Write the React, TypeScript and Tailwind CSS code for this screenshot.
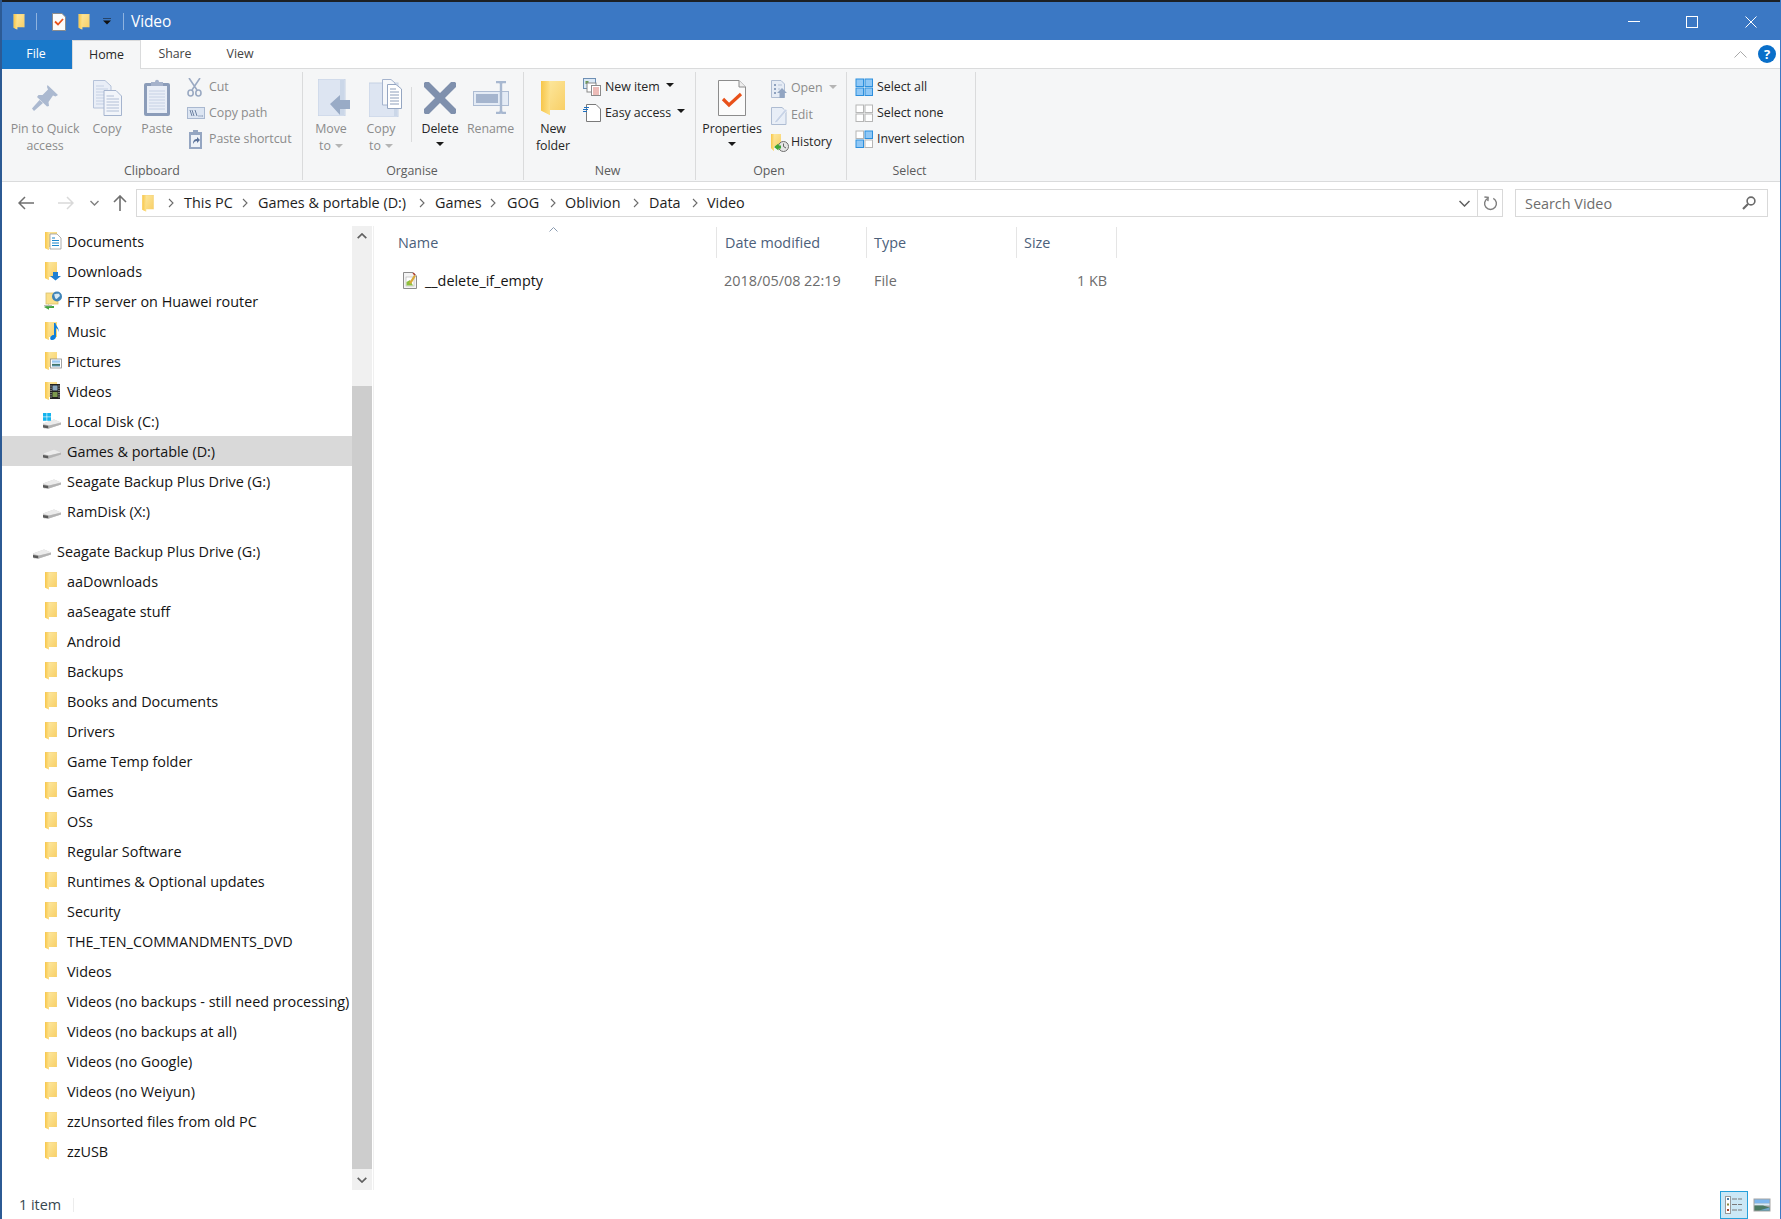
import React from "react";

const FONT = "font-['Open_Sans','Noto_Sans',sans-serif]";

function Grad() {
  return (
    <svg width="0" height="0" className="absolute">
      <defs>
        <linearGradient id="fold" x1="0" y1="0" x2="1" y2="1">
          <stop offset="0" stopColor="#fdeba6" />
          <stop offset="1" stopColor="#f8cd62" />
        </linearGradient>
        <linearGradient id="flap" x1="0" y1="0" x2="1" y2="0">
          <stop offset="0" stopColor="#f7c64a" />
          <stop offset="1" stopColor="#fde18a" />
        </linearGradient>
        <linearGradient id="sky" x1="0" y1="0" x2="0" y2="1">
          <stop offset="0" stopColor="#7db7ee" />
          <stop offset="0.5" stopColor="#cfe6f7" />
          <stop offset="0.6" stopColor="#3f6f55" />
          <stop offset="1" stopColor="#5f9fc8" />
        </linearGradient>
      </defs>
    </svg>
  );
}

function Folder({ className = "w-[12px] h-[18px]" }: { className?: string }) {
  return (
    <svg viewBox="0 0 12 18" className={className}>
      <path d="M0 0H12V15H4V17.5L0 15.5Z" fill="url(#fold)" />
      <path d="M0 0H3.5L4 2V17.5L0 15.5Z" fill="url(#flap)" />
      <path d="M0 0H12" stroke="#f3cf73" strokeWidth="0.6" />
      <path d="M11.7 0V15" stroke="#f5d684" strokeWidth="0.6" />
    </svg>
  );
}

function Drive({ win }: { win?: boolean }) {
  return (
    <svg viewBox="0 0 18 16" className="w-[18px] h-[16px]">
      <path d="M0 10.5L11 6.5L18 9.5V11.5L6 15.5H1L0 14Z" fill="#c9c9c9" />
      <path d="M0 10.5L11 6.5L18 9.5L5.5 12.5Z" fill="#ececec" />
      <path d="M0 12L5.5 12.8V15.5L0 14.5Z" fill="#5a5a5a" />
      <path d="M5.5 12.8L18 9.8V11.5L5.5 15.5Z" fill="#b3b3b3" />
      {win && (
        <g fill="#14b4ee">
          <rect x="0" y="0" width="3.6" height="3.6" />
          <rect x="4.2" y="0" width="3.8" height="3.6" />
          <rect x="0" y="4.2" width="3.6" height="3.6" />
          <rect x="4.2" y="4.2" width="3.8" height="3.6" />
        </g>
      )}
    </svg>
  );
}

function NavIcon({ kind }: { kind: string }) {
  if (kind === "drive") return <Drive />;
  if (kind === "win") return <Drive win />;
  if (kind === "folder") return <span className="ml-[2px] flex"><Folder /></span>;
  return (
    <svg viewBox="0 0 20 20" className="w-[20px] h-[20px]">
      {kind !== "ftp" && (
        <>
          <path d="M2 1H14V16H6V19L2 17Z" fill="url(#fold)" />
          <path d="M2 1H5.5L6 3V19L2 17Z" fill="url(#flap)" />
        </>
      )}
      {kind === "docs" && (
        <>
          <path d="M7 3H14L18 7V18H7Z" fill="#fff" stroke="#9b9b9b" strokeWidth="0.8" />
          <path d="M9 7H12M9 9.5H16M9 12H16M9 14.5H16" stroke="#1b86cc" strokeWidth="1.1" />
        </>
      )}
      {kind === "down" && <path d="M10 11H15V15H18L12.5 19.5L7 15H10Z" fill="#1e7fd3" />}
      {kind === "music" && <path d="M11 2H12.5C13 6 17 7 15 11C15.5 8 14 7.5 13 7V15.5C13 18 10.5 19.5 8.5 19C6.5 18.3 7 15.5 9 14.5C9.8 14.1 10.5 14 11 14.2Z" fill="#0f7fdc" />}
      {kind === "pics" && (
        <>
          <rect x="7.5" y="8" width="11" height="9" fill="#fff" stroke="#8d8d8d" strokeWidth="0.8" />
          <rect x="9" y="9.5" width="8" height="6" fill="url(#sky)" />
        </>
      )}
      {kind === "vids" && (
        <>
          <rect x="7" y="3" width="10" height="15" fill="#222" />
          <rect x="9.5" y="4.5" width="5" height="5" fill="#8aa8c0" />
          <rect x="9.5" y="11" width="5" height="5" fill="#7d9a4f" />
          <path d="M8 4.5V17M16 4.5V17" stroke="#ddd" strokeWidth="1" strokeDasharray="1 1.2" />
        </>
      )}
      {kind === "ftp" && (
        <>
          <rect x="3" y="2" width="12" height="11" fill="#fbe08a" stroke="#d9c06a" strokeWidth="0.8" />
          <circle cx="14" cy="5.5" r="5" fill="#3f84b8" />
          <path d="M11 3.5C13 2 15 3 16 2.5L17 5C15 6 14.5 8 13 8C11.5 7 12 5 11 3.5Z" fill="#d6e8f2" />
          <path d="M1 16L6 13.5V15H11V17H6V18.7Z" fill="#43a53e" />
          <rect x="1" y="14" width="8" height="1.2" fill="#bbb" />
        </>
      )}
    </svg>
  );
}

const quick: [string, string][] = [
  ["docs", "Documents"],
  ["down", "Downloads"],
  ["ftp", "FTP server on Huawei router"],
  ["music", "Music"],
  ["pics", "Pictures"],
  ["vids", "Videos"],
  ["win", "Local Disk (C:)"],
  ["drive", "Games & portable (D:)"],
  ["drive", "Seagate Backup Plus Drive (G:)"],
  ["drive", "RamDisk (X:)"],
];

const folders = [
  "aaDownloads",
  "aaSeagate stuff",
  "Android",
  "Backups",
  "Books and Documents",
  "Drivers",
  "Game Temp folder",
  "Games",
  "OSs",
  "Regular Software",
  "Runtimes & Optional updates",
  "Security",
  "THE_TEN_COMMANDMENTS_DVD",
  "Videos",
  "Videos (no backups - still need processing)",
  "Videos (no backups at all)",
  "Videos (no Google)",
  "Videos (no Weiyun)",
  "zzUnsorted files from old PC",
  "zzUSB",
];

function NavRow({ kind, label, selected }: { kind: string; label: string; selected?: boolean }) {
  return (
    <div className={`flex items-center h-[30px] ${selected ? "bg-[#d9d9d9]" : ""}`}>
      <span className="w-[65px] pl-[41px] shrink-0 flex items-center justify-start">
        <NavIcon kind={kind} />
      </span>
      <span className="pt-[1px] text-[#141414] whitespace-nowrap text-[14.4px]">{label}</span>
    </div>
  );
}

function Caret({ dim }: { dim?: boolean }) {
  return (
    <svg viewBox="0 0 8 4" className="w-[8px] h-[4px]">
      <path d="M0 0H8L4 4Z" fill={dim ? "#b5b5b5" : "#1a1a1a"} />
    </svg>
  );
}

function Big({
  className,
  icon,
  lines,
  dim,
  caret,
}: {
  className: string;
  icon: React.ReactNode;
  lines: React.ReactNode[];
  dim?: boolean;
  caret?: boolean;
}) {
  return (
    <div className={`flex flex-col items-center shrink-0 ${className}`}>
      <div className="h-[45px] flex items-center justify-center">{icon}</div>
      <div className={`leading-[17px] text-center whitespace-nowrap text-[12.4px] tracking-[-0.05px] ${dim ? "text-[#8c8c8c]" : "text-[#262626]"}`}>
        {lines.map((l, i) => (
          <div key={i} className="flex items-center justify-center gap-[4px]">{l}</div>
        ))}
      </div>
      {caret && (
        <div className="h-[14px] flex items-center">
          <Caret />
        </div>
      )}
    </div>
  );
}

function Small({
  icon,
  label,
  dim,
  caret,
  dimCaret,
  className = "h-[26px]",
  iconClass = "w-[22px]",
}: {
  icon: React.ReactNode;
  label: string;
  dim?: boolean;
  caret?: boolean;
  dimCaret?: boolean;
  className?: string;
  iconClass?: string;
}) {
  return (
    <div className={`flex items-center ${className}`}>
      <span className={`flex items-center shrink-0 ${iconClass}`}>{icon}</span>
      <span className={`whitespace-nowrap text-[12.4px] tracking-[-0.05px] ${dim ? "text-[#8c8c8c]" : "text-[#262626]"}`}>{label}</span>
      {caret && (
        <span className="ml-[6px] flex pb-[4px]">
          <Caret dim={dimCaret} />
        </span>
      )}
    </div>
  );
}

function Group({
  className,
  label,
  labelClass = "",
  children,
}: {
  className: string;
  label: string;
  labelClass?: string;
  children: React.ReactNode;
}) {
  return (
    <div className={`relative shrink-0 h-full flex flex-col border-r border-[#dadbdc] ${className}`}>
      <div className="flex-1 flex pt-[3px]">{children}</div>
      <div className={`h-[17px] mb-[1px] leading-[17px] text-center text-[12.4px] text-[#5c5c5c] tracking-[-0.05px] ${labelClass}`}>{label}</div>
    </div>
  );
}

const PinIcon = (
  <svg viewBox="0 0 26 26" className="w-[26px] h-[26px]">
    <path d="M15.5 0L26 10L23.5 11.5L21 10.5L16.5 17L17 21L15 21.5L5 12L6.5 10L10.5 10L16 4.5L15 2Z" fill="#abb9d0" />
    <path d="M7.5 15L0 23.5L2 26L11 18Z" fill="#abb9d0" />
  </svg>
);
const CopyIcon = (
  <svg viewBox="0 0 29 36" className="w-[29px] h-[36px]">
    <path d="M.5.5H12L18 6V28H.5Z" fill="#e9eef7" stroke="#b5c2d9" />
    <path d="M3 6H11M3 9H15M3 12H15M3 15H15M3 18H15M3 21H15M3 24H15" stroke="#c6d1e4" />
    <path d="M11 10.5H23L28.5 16V35.5H11Z" fill="#f2f5fa" stroke="#a5b4ce" />
    <path d="M13.5 16H21M13.5 19H26M13.5 22H26M13.5 25H26M13.5 28H26M13.5 31H26" stroke="#b2bfd6" />
  </svg>
);
const PasteIcon = (
  <svg viewBox="0 0 26 37" className="w-[26px] h-[37px]">
    <rect x="0" y="4" width="26" height="33" rx="2" fill="#8b9cb9" />
    <rect x="3" y="7" width="20" height="27" fill="#e9eef7" />
    <path d="M5 12H21M5 15H21M5 18H21M5 21H21M5 24H21M5 27H21M5 30H21" stroke="#c6d1e4" />
    <path d="M7 3H11C11 0 15 0 15 3H19V7H7Z" fill="#a5b2cb" />
  </svg>
);
const CutIcon = (
  <svg viewBox="0 0 15 19" className="w-[15px] h-[19px]" fill="none" stroke="#9aa9c2" strokeWidth="1.6">
    <path d="M2 0L10 12M13 0L5 12" />
    <ellipse cx="3.6" cy="15" rx="2.6" ry="3" />
    <ellipse cx="11.4" cy="15" rx="2.6" ry="3" />
  </svg>
);
const PathIcon = (
  <svg viewBox="0 0 18 12" className="w-[18px] h-[12px]">
    <rect x="0.5" y="0.5" width="17" height="11" fill="#dce5f2" stroke="#a9b8d0" />
    <path d="M3 3L5 9M5 3L7 9M8 3L10 9" stroke="#5f7598" strokeWidth="0.9" fill="none" />
    <path d="M11.5 9H12.5M13.5 9H14.5M15 9H15.8" stroke="#5f7598" />
  </svg>
);
const ShortcutIcon = (
  <svg viewBox="0 0 13 19" className="ml-[2px] w-[13px] h-[19px]">
    <rect x="0" y="2" width="13" height="17" fill="#95a6c2" />
    <rect x="2" y="5" width="9" height="12" fill="#eef2f8" />
    <rect x="4" y="0" width="5" height="4" fill="#95a6c2" />
    <path d="M4 14C4 10 6 9 8 9V7L11 10L8 13V11C6 11 5 12 4 14Z" fill="#5a7199" />
  </svg>
);
const MoveIcon = (
  <svg viewBox="0 0 32 37" className="ml-[6px] w-[32px] h-[37px]">
    <rect x="0" y="0" width="27" height="37" fill="#dde5f2" stroke="#c5d1e4" />
    <rect x="22" y="1" width="4" height="35" fill="#cbd7e8" />
    <path d="M12 25L22 16V21H32V30H22V36Z" fill="#99abc6" />
  </svg>
);
const CopyToIcon = (
  <svg viewBox="0 0 33 38" className="ml-[8px] w-[33px] h-[38px]">
    <rect x="0" y="4" width="29" height="34" fill="#dde5f2" stroke="#c5d1e4" />
    <rect x="25" y="18" width="3" height="19" fill="#cbd7e8" />
    <path d="M13.5.5H22L26 4V26H13.5Z" fill="#f6f8fb" stroke="#a5b4ce" />
    <path d="M18.5 5.5H27L32.5 10V29.5H18.5Z" fill="#fff" stroke="#95a6c2" />
    <path d="M21 10H27M21 13H30M21 16H30M21 19H30M21 22H30M21 25H30" stroke="#8d9eba" />
  </svg>
);
const DelIcon = (
  <svg viewBox="0 0 32 32" className="w-[32px] h-[32px]">
    <path d="M3 3L29 29M29 3L3 29" stroke="#7f90ad" strokeWidth="7" strokeLinecap="square" />
  </svg>
);
const RenameIcon = (
  <svg viewBox="0 0 36 33" className="w-[36px] h-[33px]">
    <rect x="0.5" y="10.5" width="35" height="14" fill="#e4ebf5" stroke="#adbcd3" />
    <rect x="3" y="13" width="22" height="9" fill="#a5b5ce" />
    <path d="M23 1H26C27.5 1 28 2 28 3V29C28 31 27.5 32 26 32H23M33 1H30C28.5 1 28 2 28 3M28 29C28 31 28.5 32 30 32H33" stroke="#a8b8d0" strokeWidth="2.4" fill="none" />
  </svg>
);
const BigFolder = (
  <svg viewBox="0 0 24 34" className="w-[24px] h-[34px]">
    <path d="M0 0H24V29H9V34L0 29.5Z" fill="url(#fold)" />
    <path d="M0 0H8L9 4V34L0 29.5Z" fill="url(#flap)" />
  </svg>
);
const NewItemIcon = (
  <svg viewBox="0 0 18 18" className="w-[18px] h-[18px]">
    <rect x="0.5" y="0.5" width="12" height="10" fill="#dbe9f6" stroke="#6e8fb4" />
    <rect x="2.5" y="3" width="3" height="3" fill="#6d9a54" />
    <rect x="4" y="5" width="9" height="9" fill="#fff" stroke="#8a8a8a" />
    <rect x="8.5" y="7.5" width="9" height="10" fill="#fff" stroke="#8a8a8a" />
    <path d="M10 10H16M10 12H16M10 14H16M10 16H16" stroke="#d0574b" strokeWidth="0.8" />
  </svg>
);
const EasyIcon = (
  <svg viewBox="0 0 18 18" className="w-[18px] h-[18px]">
    <path d="M3.5.5H13L17.5 5V17.5H3.5Z" fill="#fff" stroke="#7a7a7a" />
    <path d="M1 3.5H6M0 5.5H5M0 7.5H4" stroke="#1d6fc0" strokeWidth="1" />
  </svg>
);
const PropsIcon = (
  <svg viewBox="0 0 28 36" className="w-[28px] h-[36px]">
    <path d="M.5.5H21L27.5 7V35.5H.5Z" fill="#fbfbfb" stroke="#8c8c8c" />
    <path d="M21 .5V7H27.5" fill="#eee" stroke="#8c8c8c" />
    <path d="M5 19L11 25L23 14" stroke="#e8511a" strokeWidth="3.2" fill="none" />
  </svg>
);
const OpenIcon = (
  <svg viewBox="0 0 16 18" className="w-[16px] h-[18px]">
    <path d="M.5.5H10L13.5 4V17.5H.5Z" fill="#e6ecf5" stroke="#aebcd2" />
    <path d="M3 4H5V6H3ZM3 8H5V10H3ZM3 12H5V14H3Z" fill="#8fa2bf" />
    <path d="M7 5H11M7 9H9" stroke="#b5c2d7" />
    <path d="M6 13L11 8L16 13H13.5V18H8.5V13Z" fill="#92a5c2" />
  </svg>
);
const EditIcon = (
  <svg viewBox="0 0 17 18" className="w-[17px] h-[18px]">
    <path d="M.5.5H11L15 4V17.5H.5Z" fill="#e8eef7" stroke="#aebcd2" />
    <path d="M4 14L14 2L16.5 3L6 15.5L3 16Z" fill="#c8d4e7" stroke="#fff" strokeWidth="0.5" />
  </svg>
);
const HistoryIcon = (
  <svg viewBox="0 0 18 18" className="w-[18px] h-[18px]">
    <path d="M0 0H10V12H3V17L0 14Z" fill="url(#fold)" />
    <path d="M0 0H3V17L0 14Z" fill="url(#flap)" />
    <circle cx="12.5" cy="12.5" r="5" fill="#e4e4e4" stroke="#6d6d6d" />
    <path d="M12.5 9.5V12.5L15 14" stroke="#555" fill="none" strokeWidth="0.9" />
    <path d="M3 13L7.5 9.5V11.5H10V14.5H7.5V16.5Z" fill="#3fa535" />
  </svg>
);
function Sel({ a, b, c, d }: { a?: boolean; b?: boolean; c?: boolean; d?: boolean }) {
  const cell = (x: number, y: number, on?: boolean) => (
    <rect x={x + 0.5} y={y + 0.5} width="7.5" height="7.5" fill={on ? "#90c8f6" : "#fff"} stroke={on ? "#2d8fdd" : "#b6b6b6"} />
  );
  return (
    <svg viewBox="0 0 18 18" className="w-[18px] h-[18px]">
      {cell(0.5, 0.5, a)}
      {cell(9.5, 0.5, b)}
      {cell(0.5, 9.5, c)}
      {cell(9.5, 9.5, d)}
    </svg>
  );
}
const CheckDoc = (
  <svg viewBox="0 0 14 18" className="w-[14px] h-[18px]">
    <path d="M.5.5H10L13.5 4V17.5H.5Z" fill="#fbfbfb" stroke="#8c8c8c" />
    <path d="M3 8.5L6 11.5L11 6" stroke="#e8511a" strokeWidth="1.8" fill="none" />
  </svg>
);

function Chev({ className }: { className: string }) {
  return (
    <svg viewBox="0 0 6 10" className={`w-[6px] h-[10px] shrink-0 ${className}`}>
      <path d="M1 1L5 5L1 9" fill="none" stroke="#6b6b6b" strokeWidth="1.1" />
    </svg>
  );
}

function Crumb({ children, className }: { children: string; className: string }) {
  return <span className={`whitespace-nowrap text-[#1e1e1e] shrink-0 text-[14.4px] ${className}`}>{children}</span>;
}

function Col({ className, label, children }: { className: string; label?: string; children?: React.ReactNode }) {
  return <div className={`shrink-0 whitespace-nowrap ${className}`}>{label ?? children}</div>;
}

export default function App() {
  return (
    <div className={`w-[1781px] h-[1219px] bg-white flex flex-col overflow-hidden border-l-2 border-r border-l-[#2c5a94] border-r-[#3b78c4] text-[14.4px] ${FONT}`}>
      <Grad />
      {/* title bar */}
      <div className="h-[40px] shrink-0 -mx-[2px] pl-[2px] pt-[1px] bg-[#3b78c4] border-t-2 border-[#1c2024] flex items-center text-white relative">
        <span className="ml-[11px] flex"><Folder className="w-[12px] h-[16px]" /></span>
        <span className="ml-[11px] w-px h-[17px] bg-[#8fb3df]" />
        <span className="ml-[15px] flex">{CheckDoc}</span>
        <span className="ml-[12px] flex"><Folder className="w-[12px] h-[16px]" /></span>
        <svg viewBox="0 0 8 7" className="ml-[13px] w-[8px] h-[7px]">
          <path d="M0 0H8" stroke="#111" />
          <path d="M0 2.5H8L4 6.5Z" fill="#111" />
        </svg>
        <span className="ml-[12px] w-px h-[17px] bg-[#8fb3df]" />
        <span className="ml-[7px] text-[15.5px] tracking-[-0.1px]">Video</span>
        <span className="flex-1" />
        <span className="w-[12px] h-px bg-white" />
        <svg viewBox="0 0 12 12" className="ml-[46px] w-[12px] h-[12px]">
          <rect x=".5" y=".5" width="11" height="11" fill="none" stroke="#fff" />
        </svg>
        <svg viewBox="0 0 12 12" className="ml-[47px] mr-[25px] w-[12px] h-[12px]">
          <path d="M.5.5L11.5 11.5M11.5.5L.5 11.5" stroke="#fff" />
        </svg>
      </div>
      {/* tabs */}
      <div className="h-[29px] shrink-0 flex items-stretch border-b border-[#dadbdc] relative text-[12.4px] tracking-[-0.05px]">
        <div className="w-[70px] -mb-px bg-[#1979ca] text-white flex items-center justify-center pr-[2px]">File</div>
        <div className="w-[69px] -mb-px bg-[#f5f6f7] border border-b-0 border-[#dadbdc] text-[#262626] flex items-center justify-center">Home</div>
        <div className="w-[68px] text-[#444] flex items-center justify-center">Share</div>
        <div className="w-[62px] text-[#444] flex items-center justify-center">View</div>
        <span className="flex-1" />
        <div className="flex items-center pr-[4px]">
          <svg viewBox="0 0 13 7" className="w-[13px] h-[7px]">
            <path d="M.5 6.5L6.5.5L12.5 6.5" fill="none" stroke="#a9a9a9" />
          </svg>
          <span className="ml-[11px] w-[18px] h-[18px] rounded-full bg-[#0a6fc9] flex items-center justify-center text-white font-bold text-[13px] leading-none">?</span>
        </div>
      </div>
      {/* ribbon */}
      <div className="h-[113px] shrink-0 bg-[#f5f6f7] border-b border-[#dadbdc] flex pt-[3px] pb-[1px]">
        <Group className="w-[301px]" label="Clipboard">
          <Big className="ml-[8px] w-[70px]" icon={PinIcon} lines={["Pin to Quick", "access"]} dim />
          <Big className="w-[54px]" icon={CopyIcon} lines={["Copy"]} dim />
          <Big className="w-[46px]" icon={PasteIcon} lines={["Paste"]} dim />
          <div className="ml-[7px] flex flex-col -mt-[1px]">
            <Small icon={CutIcon} label="Cut" dim />
            <Small icon={PathIcon} label="Copy path" dim />
            <Small icon={ShortcutIcon} label="Paste shortcut" dim />
          </div>
        </Group>
        <Group className="w-[221px]" labelClass="pr-[2px]" label="Organise">
          <Big className="ml-[4px] w-[48px]" icon={MoveIcon} lines={["Move", <>to <Caret dim /></>]} dim />
          <Big className="ml-[2px] w-[48px]" icon={CopyToIcon} lines={["Copy", <>to <Caret dim /></>]} dim />
          <span className="ml-[6px] mt-[12px] w-px h-[55px] bg-[#dadbdc]" />
          <Big className="ml-[2px] w-[52px]" icon={DelIcon} lines={["Delete"]} caret />
          <Big className="w-[49px]" icon={RenameIcon} lines={["Rename"]} dim />
        </Group>
        <Group className="w-[172px]" labelClass="pr-[4px]" label="New">
          <Big className="ml-[2px] w-[54px]" icon={BigFolder} lines={["New", "folder"]} />
          <div className="ml-[3px] flex flex-col -mt-[1px]">
            <Small icon={NewItemIcon} label="New item" caret />
            <Small icon={EasyIcon} label="Easy access" caret />
          </div>
        </Group>
        <Group className="w-[151px]" labelClass="pr-[4px]" label="Open">
          <Big className="ml-[2px] w-[68px]" icon={PropsIcon} lines={["Properties"]} caret />
          <div className="ml-[5px] flex flex-col">
            <Small className="h-[27px]" iconClass="w-[20px]" icon={OpenIcon} label="Open" dim caret dimCaret />
            <Small className="h-[27px]" iconClass="w-[20px]" icon={EditIcon} label="Edit" dim />
            <Small className="h-[27px]" iconClass="w-[20px]" icon={HistoryIcon} label="History" />
          </div>
        </Group>
        <Group className="w-[129px]" labelClass="pr-[3px]" label="Select">
          <div className="ml-[8px] flex flex-col -mt-[1px]">
            <Small icon={<Sel a b c d />} label="Select all" />
            <Small icon={<Sel />} label="Select none" />
            <Small icon={<Sel b c />} label="Invert selection" />
          </div>
        </Group>
      </div>
      {/* address */}
      <div className="h-[40px] shrink-0 flex items-center pt-[2px]">
        <svg viewBox="0 0 16 14" className="ml-[16px] w-[16px] h-[14px]" fill="none" stroke="#6f6f6f" strokeWidth="1.5">
          <path d="M16 7H1M7 1L1 7L7 13" />
        </svg>
        <svg viewBox="0 0 16 14" className="ml-[24px] w-[16px] h-[14px]" fill="none" stroke="#d9d9d9" strokeWidth="1.5">
          <path d="M0 7H15M9 1L15 7L9 13" />
        </svg>
        <svg viewBox="0 0 9 6" className="ml-[16px] w-[9px] h-[6px]" fill="none" stroke="#808080" strokeWidth="1.4">
          <path d="M.5 1L4.5 5L8.5 1" />
        </svg>
        <svg viewBox="0 0 14 16" className="ml-[14px] w-[14px] h-[16px]" fill="none" stroke="#6f6f6f" strokeWidth="1.6">
          <path d="M7 16V1M1 7L7 1L13 7" />
        </svg>
        <div className="ml-[9px] w-[1367px] h-[28px] border border-[#d9d9d9] flex items-center">
          <span className="ml-[5px] flex"><Folder className="w-[12px] h-[17px]" /></span>
          <Chev className="ml-[14px] mr-[10px]" />
          <Crumb className="w-[58px]">This PC</Crumb>
          <Chev className="mr-[10px]" />
          <Crumb className="w-[161px]">Games &amp; portable (D:)</Crumb>
          <Chev className="mr-[10px]" />
          <Crumb className="w-[55px]">Games</Crumb>
          <Chev className="mr-[11px]" />
          <Crumb className="w-[43px]">GOG</Crumb>
          <Chev className="mr-[9px]" />
          <Crumb className="w-[68px]">Oblivion</Crumb>
          <Chev className="mr-[10px]" />
          <Crumb className="w-[43px]">Data</Crumb>
          <Chev className="mr-[9px]" />
          <Crumb className="w-[50px]">Video</Crumb>
          <span className="flex-1" />
          <svg viewBox="0 0 11 7" className="mr-[7px] w-[11px] h-[7px]" fill="none" stroke="#5f5f5f" strokeWidth="1.5">
            <path d="M.5 1L5.5 6L10.5 1" />
          </svg>
          <span className="w-[25px] h-full border-l border-[#d9d9d9] flex items-center justify-center">
            <svg viewBox="0 0 16 16" className="w-[15px] h-[15px]" fill="none" stroke="#7d7d7d" strokeWidth="1.5">
              <path d="M5 2.5A6.3 6.3 0 1 0 11 2.5" />
              <path d="M1.5 1L5.5 1.5L5.2 5.5" />
            </svg>
          </span>
        </div>
        <div className="ml-[12px] w-[253px] h-[28px] border border-[#d9d9d9] flex items-center pl-[9px] pr-[11px] text-[#6d6d6d]">
          <span className="flex-1 pt-[1px]">Search Video</span>
          <svg viewBox="0 0 14 14" className="w-[14px] h-[14px]" fill="none" stroke="#6a6a6a" strokeWidth="1.6">
            <circle cx="9" cy="5" r="3.9" />
            <path d="M6 8L1 13" strokeWidth="2.2" />
          </svg>
        </div>
      </div>
      {/* body */}
      <div className="flex-1 min-h-0 flex pt-[4px]">
        <div className="w-[350px] shrink-0">
          {quick.map(([k, l]) => (
            <NavRow key={l} kind={k} label={l} selected={l.startsWith("Games")} />
          ))}
          <div className="h-[10px]" />
          <div className="flex items-center h-[30px] pl-[31px]">
            <span className="w-[24px] shrink-0 flex"><Drive /></span>
            <span className="pt-[1px] text-[#141414] whitespace-nowrap text-[14.4px]">Seagate Backup Plus Drive (G:)</span>
          </div>
          {folders.map((f) => (
            <NavRow key={f} kind="folder" label={f} />
          ))}
        </div>
        <div className="w-[20px] shrink-0 h-[964px] bg-[#f0f0f0] flex flex-col">
          <div className="h-[20px] flex items-center justify-center">
            <svg viewBox="0 0 10 6" className="w-[10px] h-[6px]" fill="none" stroke="#606060" strokeWidth="1.7">
              <path d="M.7 5.2L5 1L9.3 5.2" />
            </svg>
          </div>
          <div className="h-[140px]" />
          <div className="h-[783px] bg-[#cdcdcd]" />
          <div className="flex-1 flex items-center justify-center">
            <svg viewBox="0 0 10 6" className="w-[10px] h-[6px]" fill="none" stroke="#606060" strokeWidth="1.7">
              <path d="M.7 .8L5 5L9.3 .8" />
            </svg>
          </div>
        </div>
        <div className="w-[2px] h-[964px] ml-[1px] border-l border-[#f0f0f0]" />
        <div className="flex-1 min-w-0">
          <div className="relative h-[32px] pt-[1px] flex items-stretch text-[#4c607a] text-[14.4px]">
            <svg viewBox="0 0 9 5" className="absolute left-[174px] top-[1px] w-[9px] h-[5px]" fill="none" stroke="#8a9bb0">
              <path d="M.5 4.5L4.5 .5L8.5 4.5" />
            </svg>
            <Col className="w-[342px] pl-[23px] flex items-center border-r border-[#e5e5e5]" label="Name" />
            <Col className="w-[150px] pl-[8px] flex items-center border-r border-[#e5e5e5]" label="Date modified" />
            <Col className="w-[150px] pl-[7px] flex items-center border-r border-[#e5e5e5]" label="Type" />
            <Col className="w-[100px] pl-[7px] flex items-center border-r border-[#e5e5e5]" label="Size" />
          </div>
          <div className="h-[30px] mt-[8px] flex items-center text-[14.4px] text-[#6d6d6d]">
            <Col className="w-[342px] pl-[28px] flex items-center text-[#141414]">
              <svg viewBox="0 0 14 17" className="w-[14px] h-[17px] mr-[8px]">
                <path d="M.5.5H10L13.5 4V16.5H.5Z" fill="#f4f4f4" stroke="#8c8c8c" />
                <rect x="3" y="5" width="8" height="9" fill="#fff" stroke="#a0a0a0" strokeWidth="0.5" />
                <path d="M3.5 13.5V10L7 8L10 13.5Z" fill="#8cbf3f" />
                <path d="M6 11L11 3L13 4L8 12Z" fill="#d9a93a" />
                <path d="M10 1L12 3" stroke="#b23a2c" strokeWidth="1.4" />
              </svg>
              <span>__delete_if_empty</span>
            </Col>
            <Col className="w-[150px] pl-[7px]" label="2018/05/08 22:19" />
            <Col className="w-[150px] pl-[7px]" label="File" />
            <Col className="w-[90px] text-right" label="1 KB" />
          </div>
        </div>
      </div>
      {/* status */}
      <div className="h-[28px] -mt-[28px] relative shrink-0 flex items-center text-[#37474f] text-[14.4px] pointer-events-none">
        <span className="ml-[17px] w-[54px]">1 item</span>
        <span className="w-px h-[14px] bg-[#ececec]" />
        <span className="flex-1" />
        <span className="w-[28px] h-[28px] bg-[#cbe8f6] border border-[#26a0da] flex items-center justify-center">
          <svg viewBox="0 0 18 18" className="w-[18px] h-[18px]">
            <rect x="0.5" y="0.5" width="5" height="17" fill="#fff" stroke="#999" />
            <rect x="2" y="2" width="2" height="2" fill="#4d7fa5" />
            <rect x="2" y="7.5" width="2" height="2" fill="#8a8a3a" />
            <rect x="2" y="13" width="2" height="2" fill="#a6472e" />
            <path d="M7 3H12M13 3H17M7 8.5H12M13 8.5H17M7 14H12M13 14H17" stroke="#7a7a7a" />
          </svg>
        </span>
        <svg viewBox="0 0 18 14" className="ml-[5px] mr-[9px] w-[18px] h-[14px]">
          <rect x=".5" y=".5" width="17" height="13" fill="#a3a3a3" />
          <rect x="1.5" y="1.5" width="15" height="4" fill="#7db7ee" />
          <rect x="1.5" y="5.5" width="15" height="2" fill="#d8ebf7" />
          <path d="M1.5 7.5H10L16.5 9.5V12.5H1.5Z" fill="#4a7a63" />
          <path d="M6 12.5L16.5 9.5V12.5Z" fill="#6fa5c9" />
        </svg>
      </div>
    </div>
  );
}
